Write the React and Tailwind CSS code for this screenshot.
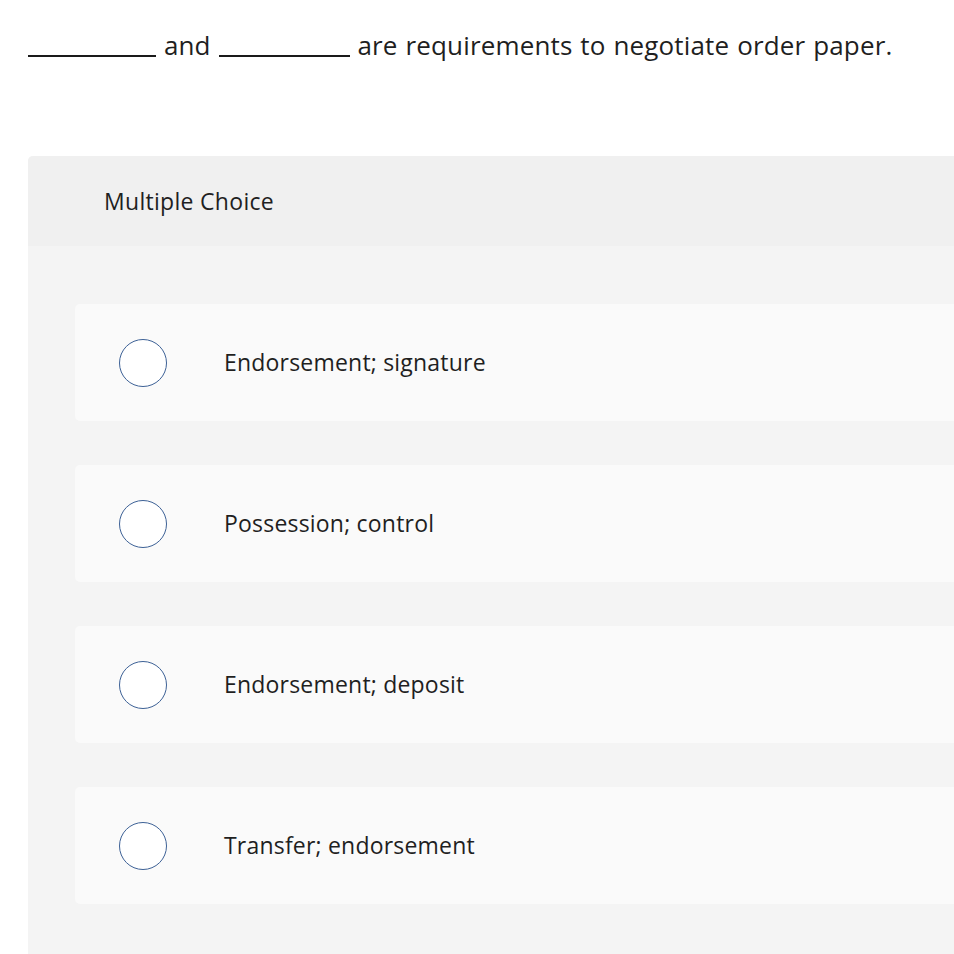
const options = [
  'Endorsement; signature',
  'Possession; control',
  'Endorsement; deposit',
  'Transfer; endorsement',
]

function Blank({ width }) {
  return <span className={`inline-block border-b-2 border-[#1a1a1a] align-[-2px] ${width}`} />
}

export default function App() {
  return (
    <div className="w-[954px] h-[954px] overflow-hidden bg-white text-[#1f1f1f] font-['Open_Sans','Liberation_Sans',sans-serif]">
      <p className="pl-[28px] pt-[27px] text-[26px] leading-[36px] tracking-[0.15px] [word-spacing:1px] whitespace-nowrap">
        <Blank width="w-[128px]" /> and <Blank width="w-[131px]" /> are requirements to negotiate order paper.
      </p>

      <div className="mt-[93px] ml-[28px] w-[980px] rounded-tl-[5px] bg-[#f4f4f4]">
        <div className="h-[90px] flex items-center pl-[76px] bg-[#f0f0f0] rounded-tl-[5px] text-[23px] tracking-[0.3px]">
          Multiple Choice
        </div>
        <div className="pt-[58px] pl-[47px] flex flex-col gap-[44px] pb-[60px]">
          {options.map((opt) => (
            <div key={opt} className="h-[117px] rounded-l-[5px] bg-[#fafafa] flex items-center">
              <span className="ml-[44px] w-[48px] h-[48px] rounded-full border-[1.5px] border-[#3d6196] bg-white shrink-0" />
              <span className="ml-[57px] text-[23px] tracking-[0.2px]">{opt}</span>
            </div>
          ))}
        </div>
      </div>
    </div>
  )
}
